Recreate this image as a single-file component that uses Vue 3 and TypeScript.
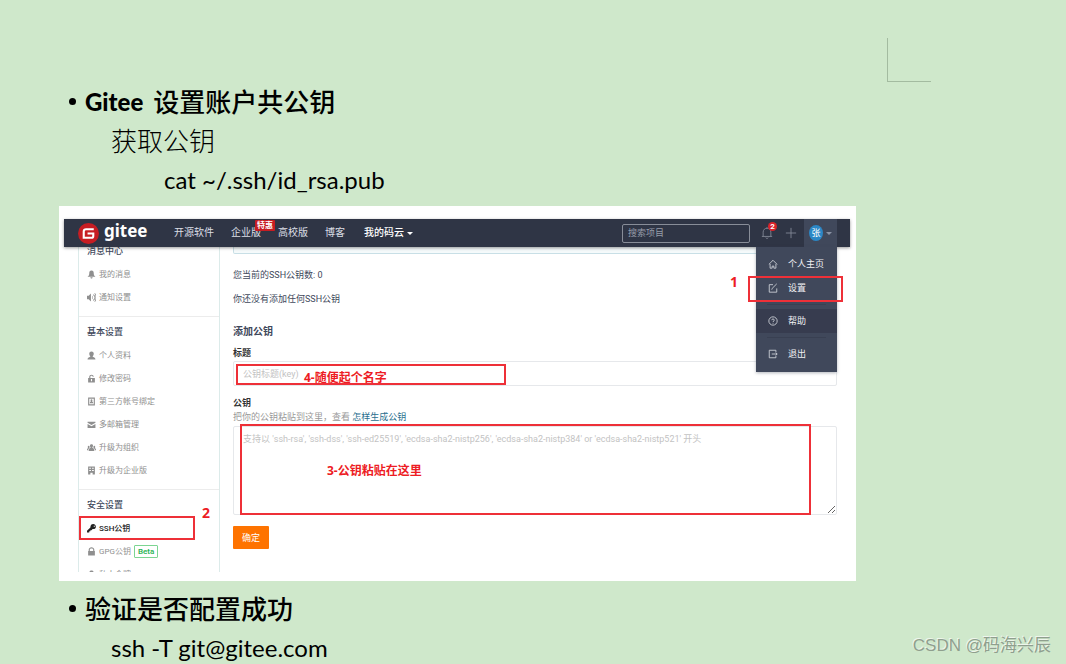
<script setup lang="ts">
import { ref } from 'vue'

interface SideItem {
  label: string
  icon: string
  active?: boolean
  badge?: string
}
interface SideGroup {
  title: string
  items: SideItem[]
}
interface NavItem {
  label: string
  tag?: string
  caret?: boolean
}

const navItems: NavItem[] = [
  { label: '开源软件' },
  { label: '企业版', tag: '特惠' },
  { label: '高校版' },
  { label: '博客' },
  { label: '我的码云', caret: true },
]

const groups: SideGroup[] = [
  {
    title: '消息中心',
    items: [
      { label: '我的消息', icon: 'M8 1c-3 0-4 2-4 5 0 3-1 4-3 6h14c-2-2-3-3-3-6 0-3-1-5-4-5zM6 13h4c0 3-4 3-4 0z' },
      { label: '通知设置', icon: 'M0 5h3l4-4v14l-4-4H0zM9 5c2 1 2 5 0 6V9.500c.7-.8.7-2.200 0-3zM11 2c5 2 5 10 0 12v-2c3-1.500 3-6.500 0-8zM14 0c4 4 4 12 0 16l-.8-1c3-4 3-10 0-14z' },
    ],
  },
  {
    title: '基本设置',
    items: [
      { label: '个人资料', icon: 'M8 1c3 0 4 2 4 4s-1 4-2 5c1 1 5 1 5 5H1c0-4 4-4 5-5-1-1-2-3-2-5s1-4 4-4z' },
      { label: '修改密码', icon: 'M4 7V5c0-5 8-5 8 0h-2c0-2.500-4-2.500-4 0v2h8v8H2V7zM7 9v4h2V9z' },
      { label: '第三方帐号绑定', icon: 'M2 1h12v14H2zM4 3v10h8V3zM8 4c2 0 2 3 1 4 1 .5 2 1 2 3H5c0-2 1-2.500 2-3-1-1-1-4 1-4z' },
      { label: '多邮箱管理', icon: 'M1 3h14v2L8 9 1 5zM1 7l7 4 7-4v7H1z' },
      { label: '升级为组织', icon: 'M8 2c4 0 3 5 1 6 1 1 4 1 4 6H3c0-5 3-5 4-6-2-1-3-6 1-6zM3 5c2 0 2 3 1 4-1 1-2 2-2 4H0c0-3 1-3 2-4-1-1-1-4 1-4zM13 5c2 0 2 3 1 4 1 1 2 1 2 4h-2c0-2-1-3-2-4-1-1-1-4 1-4z' },
      { label: '升级为企业版', icon: 'M2 1h12v14h-4v-3H6v3H2zM4 3v2h3V3zM9 3v2h3V3zM4 7v2h3V7zM9 7v2h3V7z' },
    ],
  },
  {
    title: '安全设置',
    items: [
      { label: 'SSH公钥', active: true, icon: 'M11 0c7 1 6 10-1 9l-2 2H6v2H4v2H0v-3l6-6c0-4 2-6 5-6zM12 3v2h2V3z' },
      { label: 'GPG公钥', icon: 'M3 7V5c0-6 10-6 10 0v2h1v8H2V7zM5 7h6V5c0-3-6-3-6 0z', badge: 'Beta' },
      { label: '私人令牌', icon: 'M8 1c3 0 4 2 4 4s-1 4-2 5c1 1 5 1 5 5H1c0-4 4-4 5-5-1-1-2-3-2-5s1-4 4-4z' },
    ],
  },
]

const search = ref('')
const title = ref('')
const publicKey = ref('')
const keyHint =
  "支持以 'ssh-rsa', 'ssh-dss', 'ssh-ed25519', 'ecdsa-sha2-nistp256', 'ecdsa-sha2-nistp384' or 'ecdsa-sha2-nistp521' 开头"
</script>

<template>
  <main class="page">
    <div class="crop-mark"></div>

    <h1 class="line heading"><span class="dot"></span><b>Gitee</b>设置账户共公钥</h1>
    <p class="line sub thin">获取公钥</p>
    <p class="line command">cat ~/.ssh/id_rsa.pub</p>

    <figure class="figure">
      <header class="topbar">
        <a class="logo" href="#">
          <svg viewBox="0 0 22 22" aria-hidden="true">
            <circle cx="11" cy="11" r="11" fill="#c71d23" />
            <path d="M16.500 6.500H8.500Q6 6.500 6 9v6.500h8q2 0 2-2V11H10" fill="none" stroke="#fff" stroke-width="2.200" />
          </svg>
          <span>gitee</span>
        </a>
        <nav class="nav">
          <a v-for="item in navItems" :key="item.label" href="#" :class="{ strong: item.caret }">
            {{ item.label }}<i v-if="item.caret" class="caret"></i>
            <em v-if="item.tag" class="tag">{{ item.tag }}</em>
          </a>
        </nav>
        <input v-model="search" class="search" type="search" placeholder="搜索项目" aria-label="搜索项目" />
        <button class="tool bell" type="button" aria-label="通知">
          <svg viewBox="0 0 14 14" aria-hidden="true">
            <path d="M1 11h12M2.500 11V6c0-6 9-6 9 0v5M5.500 12.500c.5 1 2.500 1 3 0M7 0v1" />
          </svg>
          <span class="count">2</span>
        </button>
        <button class="tool plus" type="button" aria-label="新建">
          <svg viewBox="0 0 14 14" aria-hidden="true"><path d="M7 1v12M1 7h12" /></svg>
        </button>
        <div class="account">
          <button class="avatar-button" type="button">
            <span class="avatar">张</span><i class="caret dim"></i>
          </button>
          <div class="menu">
            <a href="#">
              <svg viewBox="0 0 12 12" aria-hidden="true"><path d="M1 6.500 6 1.500l5 5M2.500 6v5h2.500V8.500h2V11h2.500V6" /></svg>
              个人主页
            </a>
            <a href="#">
              <svg viewBox="0 0 12 12" aria-hidden="true"><path d="M6 2H1.500v9h9V6.500M4.500 8l.5-1.500 5.500-5.500" /></svg>
              设置
              <span class="mark mark-settings"></span>
              <strong class="step step-one">1</strong>
            </a>
            <hr />
            <a href="#" class="shaded">
              <svg viewBox="0 0 12 12" aria-hidden="true">
                <circle cx="6" cy="6" r="5" />
                <path d="M4.500 5c0-2 3-2 3 0C7.500 6 6 6 6 7.200M6 8.200v1" />
              </svg>
              帮助
            </a>
            <hr />
            <a href="#">
              <svg viewBox="0 0 12 12" aria-hidden="true"><path d="M9.500 4V1.500h-8v9h8V8M4.500 6H11M9.500 4.500 11 6 9.500 7.500" /></svg>
              退出
            </a>
          </div>
        </div>
      </header>

      <div class="screen">
        <aside class="sidebar">
          <section v-for="group in groups" :key="group.title">
            <h2>{{ group.title }}</h2>
            <a v-for="item in group.items" :key="item.label" href="#" :class="{ active: item.active }">
              <svg viewBox="0 0 16 16" aria-hidden="true"><path :d="item.icon" fill-rule="evenodd" /></svg>
              {{ item.label }}
              <span v-if="item.badge" class="badge">{{ item.badge }}</span>
              <template v-if="item.active">
                <span class="mark mark-ssh"></span>
                <strong class="step step-two">2</strong>
              </template>
            </a>
          </section>
        </aside>

        <form class="content" @submit.prevent>
          <div class="notice"></div>
          <p class="amount">您当前的SSH公钥数: 0</p>
          <p class="empty">你还没有添加任何SSH公钥</p>
          <h3>添加公钥</h3>
          <label for="key-title" class="title-label">标题</label>
          <div class="field">
            <input id="key-title" v-model="title" type="text" placeholder="公钥标题(key)" />
            <span class="mark mark-title">4-随便起个名字</span>
          </div>
          <label for="key-body" class="key-label">公钥</label>
          <p class="hint">把你的公钥粘贴到这里，查看 <a href="#">怎样生成公钥</a></p>
          <div class="field key-field">
            <textarea id="key-body" v-model="publicKey" :placeholder="keyHint"></textarea>
            <span class="mark mark-key">3-公钥粘贴在这里</span>
          </div>
          <button class="submit" type="submit">确定</button>
        </form>
      </div>
    </figure>

    <h1 class="line heading"><span class="dot"></span>验证是否配置成功</h1>
    <p class="line sub">ssh -T git@gitee.com</p>

    <span class="watermark">CSDN @码海兴辰</span>
  </main>
</template>

<style>
body {
  margin: 0;
  background: #cfe8cb;
}
</style>

<style scoped>
* {
  box-sizing: border-box;
}
.page {
  position: relative;
  height: 100vh;
  overflow: hidden;
  padding: 38px 210px 0 59px;
  background: #cfe8cb;
  color: #000;
  font-family: Lato, "Noto Sans CJK SC", sans-serif;
}
.crop-mark {
  width: 44px;
  height: 44px;
  margin: 0 -75px 0 auto;
  border: solid #a3bba0;
  border-width: 0 0 1px 1px;
}
.line {
  display: flex;
  align-items: center;
  height: 39px;
  margin: 0;
  font-size: 24px;
  line-height: 38px;
  white-space: nowrap;
}
.heading {
  padding-left: 10px;
  font-size: 26px;
  font-weight: 500;
}
.heading b {
  margin-right: 10px;
  font-size: 24px;
  font-weight: 900;
}
.dot {
  width: 7px;
  height: 7px;
  margin-right: 9px;
  border-radius: 50%;
  background: #000;
}
.sub {
  padding-left: 52px;
}
.thin {
  font-size: 26px;
  font-weight: 300;
}
.command {
  padding-left: 105px;
}
a {
  color: inherit;
  text-decoration: none;
}
button,
input,
textarea {
  margin: 0;
  font-family: inherit;
}

.figure {
  margin: 7px 0 8px;
  padding: 13px 6px 9px 5px;
  background: #fff;
  color: #40485b;
  font-family: Roboto, "Noto Sans CJK SC", sans-serif;
  font-size: 9px;
  line-height: 14px;
}
.topbar {
  position: relative;
  z-index: 2;
  display: flex;
  align-items: center;
  height: 28px;
  padding: 0 13px 0 14px;
  background: #2f3545;
  box-shadow: 0 1px 3px rgba(0, 0, 0, 0.4);
  color: #dcdfe5;
}
.logo {
  display: flex;
  align-items: center;
  gap: 5px;
  width: 96px;
  color: #fff;
  font-family: "Noto Sans", sans-serif;
  font-size: 17px;
  font-weight: 700;
}
.logo span {
  margin-top: -4px;
}
.logo svg {
  width: 21px;
  height: 21px;
}
.nav {
  display: flex;
  flex: 1;
  gap: 17px;
  font-size: 10px;
  white-space: nowrap;
}
.nav a {
  position: relative;
}
.nav .strong {
  margin-left: 2px;
  color: #fff;
  font-weight: 500;
}
.caret {
  display: inline-block;
  margin-left: 3px;
  vertical-align: middle;
  border: 3px solid transparent;
  border-top-color: currentColor;
  border-bottom: 0;
}
.dim {
  color: #8b93a5;
}
.tag {
  position: absolute;
  top: -6px;
  left: 24px;
  padding: 0 2px;
  border-radius: 1px;
  background: #c71d23;
  color: #fff;
  font-size: 8px;
  font-style: normal;
  font-weight: 700;
  line-height: 11px;
}
.search {
  width: 128px;
  height: 19px;
  padding: 0 5px;
  border: 1px solid #888d98;
  border-radius: 2px;
  outline: 0;
  background: transparent;
  color: #dcdfe5;
  font-size: 9px;
}
.search::placeholder {
  color: #989daa;
}
.tool {
  position: relative;
  width: 12px;
  height: 14px;
  padding: 0;
  border: 0;
  background: none;
}
.tool svg {
  display: block;
  width: 12px;
  height: 14px;
  fill: none;
  stroke: #858b99;
}
.bell {
  margin-left: 11px;
}
.plus {
  margin: 0 7px 0 12px;
}
.count {
  position: absolute;
  top: -4px;
  right: -4px;
  width: 9px;
  height: 9px;
  border-radius: 50%;
  background: #d9232a;
  color: #fff;
  font-size: 8px;
  font-weight: 700;
  line-height: 9px;
}
.account {
  position: relative;
  align-self: stretch;
  width: 33px;
  background: #40485b;
}
.avatar-button {
  display: flex;
  align-items: center;
  width: 100%;
  height: 100%;
  padding: 0 5px;
  border: 0;
  background: none;
}
.avatar {
  width: 16px;
  height: 16px;
  border-radius: 50%;
  background: #2b87c6;
  color: #fff;
  font-size: 9px;
  line-height: 16px;
}
.menu {
  position: absolute;
  top: 100%;
  right: 0;
  width: 81px;
  padding: 5px 0 6px;
  background: #40485b;
  box-shadow: 0 1px 3px rgba(64, 72, 91, 0.4);
  color: #f0f1f4;
}
.menu a {
  position: relative;
  display: flex;
  align-items: center;
  gap: 10px;
  height: 24px;
  padding-left: 12px;
}
.menu svg {
  width: 10px;
  height: 10px;
  fill: none;
  stroke: #d5d8de;
}
.menu hr {
  height: 1px;
  margin: 4px 11px;
  border: 0;
  background: #394052;
}
.menu .shaded {
  background: #373c4f;
}

/* Red guide frames and step numbers laid over the form */
.mark {
  position: absolute;
  display: flex;
  align-items: center;
  border: 2px solid #ee3038;
  color: #ed1c24;
  font-family: "Noto Sans", "Noto Sans CJK SC", sans-serif;
  font-size: 12px;
  font-weight: 700;
  pointer-events: none;
}
.step {
  position: absolute;
  color: #ed1c24;
  font-family: "Noto Sans", sans-serif;
  font-size: 14px;
}
.mark-settings {
  inset: 0 -6px -2px -8px;
}
.step-one {
  top: -1px;
  left: -26px;
}
.mark-ssh {
  inset: -1px 24px 0 0;
}
.step-two {
  top: -11px;
  right: 9px;
}
.mark-title {
  top: 3px;
  left: 3px;
  width: 270px;
  height: 21px;
  padding: 6px 0 0 66px;
}
.mark-key {
  inset: -2px 26px 0 7px;
  padding: 3px 0 0 85px;
}

.screen {
  display: flex;
  gap: 13px;
  height: 325px;
  padding: 0 13px 0 14px;
  overflow: hidden;
}
.sidebar {
  flex: none;
  width: 142px;
  height: 348px;
  margin-top: -7px;
  border: solid #dcebea;
  border-width: 0 1px;
}
.sidebar section + section {
  margin-top: 7px;
  padding-top: 4px;
  border-top: 1px solid #ececec;
}
.sidebar h2 {
  height: 23px;
  margin: 0;
  padding-left: 8px;
  font-size: 9px;
  font-weight: 500;
  line-height: 23px;
}
.sidebar a {
  position: relative;
  display: flex;
  align-items: center;
  gap: 3px;
  height: 23px;
  padding-left: 8px;
  color: #8f8f8f;
  font-size: 8px;
}
.sidebar .active {
  color: #222;
  font-weight: 500;
}
.sidebar svg {
  width: 9px;
  height: 9px;
  fill: currentColor;
}
.badge {
  padding: 0 3px;
  border: 1px solid #7cd592;
  border-radius: 1px;
  color: #2fb457;
  font-weight: 600;
  line-height: 11px;
}
.content {
  display: flex;
  flex: 1;
  flex-direction: column;
  min-width: 0;
}
.content p {
  margin: 0;
}
.notice {
  height: 7px;
  border: solid #c8dfe6;
  border-width: 0 1px 1px;
  border-radius: 0 0 2px 2px;
  background: #f5fafb;
}
.content .amount {
  margin-top: 14px;
}
.content .empty {
  margin-top: 10px;
}
.content h3 {
  margin: 19px 0 7px;
  font-size: 10px;
  font-weight: 600;
  line-height: 14px;
}
.content label {
  color: #333;
  font-weight: 600;
}
.key-label {
  margin-top: 10px;
}
.hint {
  color: #999;
}
.hint a {
  color: #2a6f8e;
}
.field {
  position: relative;
  margin-top: 1px;
}
.key-field {
  margin-top: 2px;
}
.field input,
.field textarea {
  display: block;
  width: 100%;
  height: 25px;
  padding: 0 9px;
  border: 1px solid #e6e8eb;
  border-radius: 2px;
  outline: 0;
  background: #fff;
  color: #40485b;
  font-size: 9px;
}
.field textarea {
  height: 89px;
  padding-top: 5px;
  line-height: 14px;
}
.field ::placeholder {
  color: #c3c3c3;
}
.submit {
  align-self: flex-start;
  margin-top: 11px;
  width: 36px;
  height: 23px;
  padding: 0;
  border: 0;
  border-radius: 1px;
  background: #fe7300;
  color: #fff;
  font-size: 9px;
}
.watermark {
  position: absolute;
  right: 15px;
  bottom: 6px;
  color: #8f9f8e;
  font-family: "Liberation Sans", "Noto Sans CJK SC", sans-serif;
  font-size: 17px;
  line-height: 24px;
  text-shadow: -1px -1px 0 #eef6ed;
}
</style>
